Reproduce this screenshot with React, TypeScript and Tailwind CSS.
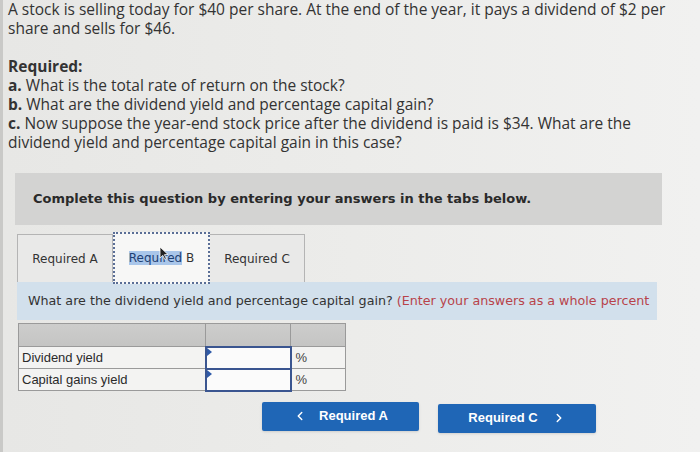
import { ChevronLeft, ChevronRight } from "lucide-react";

const rows = [
  { label: "Dividend yield" },
  { label: "Capital gains yield" },
];

export default function App() {
  return (
    <div className="w-[700px] h-[452px] overflow-hidden border-l-[3px] border-[#c9c9c7] bg-gradient-to-r from-[#e7e7e5] via-[#ececea] to-[#f1f1f0] text-[#2e2e2e]">
      {/* Question text */}
      <div className="pl-[5px] whitespace-nowrap font-['Open_Sans',Arial,sans-serif] text-[15.5px] leading-[19px] text-[#333]">
        <p>
          A stock is selling today for $40 per share. At the end of the year, it pays a dividend of $2 per
          <br />
          share and sells for $46.
        </p>
        <p className="mt-[19px] font-bold">Required:</p>
        <p>
          <b>a.</b> What is the total rate of return on the stock?
        </p>
        <p>
          <b>b.</b> What are the dividend yield and percentage capital gain?
        </p>
        <p>
          <b>c.</b> Now suppose the year-end stock price after the dividend is paid is $34. What are the
          <br />
          dividend yield and percentage capital gain in this case?
        </p>
      </div>

      {/* Instruction banner */}
      <div className="ml-[12px] mt-[21px] w-[647px] h-[52px] bg-[#d3d3d2] flex items-center pl-[18px] font-['DejaVu_Sans',Verdana,sans-serif] text-[13px] font-bold text-[#2a2a2a]">
        Complete this question by entering your answers in the tabs below.
      </div>

      {/* Tabs */}
      <div className="ml-[14px] mt-[7px] flex items-end font-['DejaVu_Sans',Verdana,sans-serif] text-[12px] text-[#333]">
        <div className="w-[96px] h-[48px] flex items-center justify-center bg-[#e9e9e8] border border-[#b4b4b4] border-b-0">
          Required A
        </div>
        <div className="relative w-[97px] h-[52px] -mb-[2px] flex items-center justify-center bg-[#f7f7f6] border-2 border-dotted border-[#5a6e96]">
          <span>
            <span className="bg-[#a9c6ea] text-[#1d3f73]">Required</span> B
          </span>
          <svg className="absolute left-[44px] top-[12px]" width="10" height="14" viewBox="0 0 10 14">
            <path d="M1 1 L1 12 L3.8 9.4 L5.8 13.4 L7.4 12.6 L5.4 8.7 L9 8.5 Z" fill="#222" stroke="#fff" strokeWidth="0.8" />
          </svg>
        </div>
        <div className="w-[95px] h-[48px] flex items-center justify-center bg-[#e9e9e8] border border-[#b4b4b4] border-b-0 border-l-0">
          Required C
        </div>
      </div>

      {/* Panel */}
      <div className="ml-[14px] w-[640px] h-[38px] bg-[#d2e0ec] flex items-center pl-[11px] overflow-hidden whitespace-nowrap font-['DejaVu_Sans',Verdana,sans-serif] text-[12.7px] text-[#333]">
        What are the dividend yield and percentage capital gain?&nbsp;
        <span className="text-[#b8434a]">(Enter your answers as a whole percent</span>
      </div>

      {/* Table */}
      <table className="ml-[15px] mt-[3px] border-collapse font-['Liberation_Sans',Arial,sans-serif] text-[13px] text-[#2a2a2a]">
        <tbody>
          <tr className="h-[23px] bg-gradient-to-b from-[#cdcdcc] to-[#c4c4c3]">
            <td className="w-[187px] border border-[#9a9a9a]" />
            <td className="w-[85px] border border-[#9a9a9a]" />
            <td className="w-[55px] border border-[#9a9a9a]" />
          </tr>
          {rows.map((r) => (
            <tr key={r.label} className="h-[22px] bg-[#f3f3f2]">
              <td className="border border-[#9a9a9a] pl-[3px]">{r.label}</td>
              <td className="border-2 border-[#3a5590] bg-[#fbfbfb] relative p-0">
                <span className="absolute left-0 top-0 w-0 h-0 border-t-[4px] border-b-[4px] border-l-[5px] border-t-transparent border-b-transparent border-l-[#2f5aa8]" />
              </td>
              <td className="border border-[#9a9a9a] pl-[4px] text-[#444]">%</td>
            </tr>
          ))}
        </tbody>
      </table>

      {/* Nav buttons */}
      <div className="ml-[259px] mt-[10px] flex items-start gap-[19px] font-['Liberation_Sans',Arial,sans-serif] text-[13px] font-bold text-white">
        <button
          type="button"
          className="w-[157px] h-[29px] bg-[#1f66b6] rounded-[2px] flex items-center justify-center gap-[12px] shadow-sm"
        >
          <ChevronLeft className="w-[14px] h-[14px]" strokeWidth={2.5} />
          Required A
        </button>
        <button
          type="button"
          className="mt-[2px] w-[158px] h-[29px] bg-[#1f66b6] rounded-[2px] flex items-center justify-center gap-[14px] shadow-sm"
        >
          Required C
          <ChevronRight className="w-[14px] h-[14px]" strokeWidth={2.5} />
        </button>
      </div>
    </div>
  );
}
